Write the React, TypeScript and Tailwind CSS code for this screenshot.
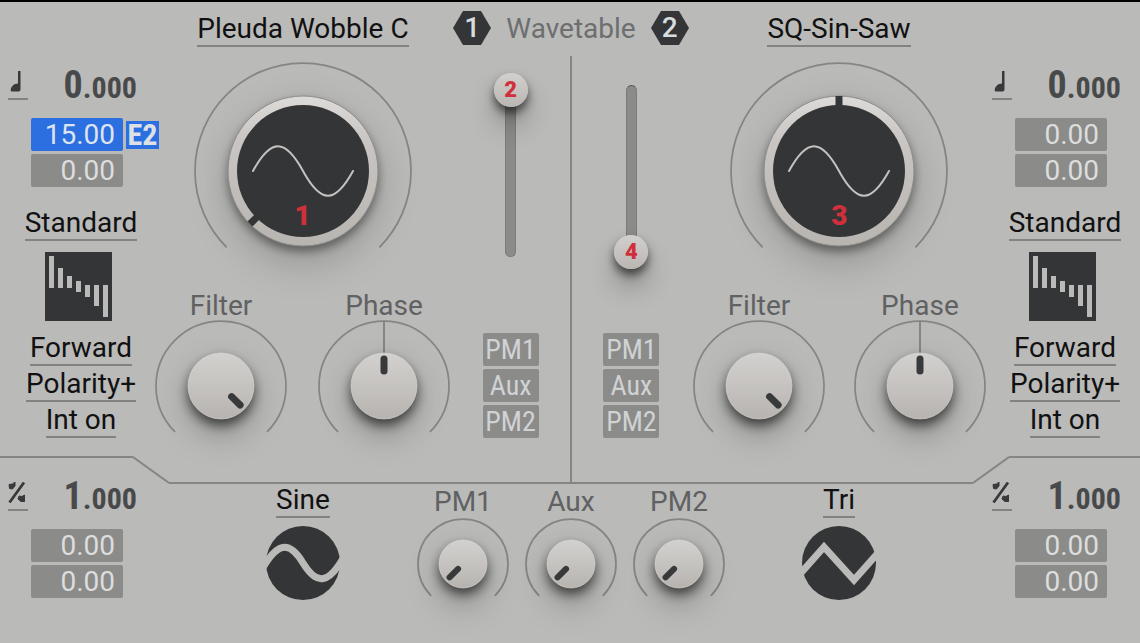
import React, { useId, useState } from "react";
import clsx from "clsx";

const ARC_ANGLE = Math.PI / 4;

interface MenuProps {
  label: string;
  options: string[];
}

const Menu: React.FC<MenuProps> = ({ label, options }) => (
  <select
    aria-label={label}
    className="h-[35px] field-sizing-content appearance-none border-b-2 border-[#828281] bg-transparent text-center text-[28px] leading-[33px] text-[#111112]"
  >
    {options.map((option) => (
      <option key={option}>{option}</option>
    ))}
  </select>
);

interface ArcProps {
  radius: number;
}

// 270 degree scale with the gap at the bottom
const Arc: React.FC<ArcProps> = ({ radius }) => {
  const end = radius * Math.sin(ARC_ANGLE);
  return (
    <path
      d={`M${-end} ${end}A${radius} ${radius} 0 1 1 ${end} ${end}`}
      fill="none"
      stroke="#858584"
      strokeWidth={1.75}
    />
  );
};

interface KnobProps {
  label: string;
  angle: number;
  small?: boolean;
  centered?: boolean;
}

const Knob: React.FC<KnobProps> = ({ label, angle, small, centered }) => {
  const id = useId();
  const face = `${id}-face`;
  const radius = small ? 24 : 33;
  return (
    <div className="flex flex-col items-center">
      <label
        htmlFor={id}
        className="text-[28px] leading-[33px] text-[#606162]"
      >
        {label}
      </label>
      <div className={clsx("relative", small ? "size-[92px]" : "-mt-0.5 size-[132px]")}>
        <svg
          viewBox={small ? "-46 -46 92 92" : "-66 -66 132 132"}
          className="size-full overflow-visible"
          aria-hidden="true"
        >
          <defs>
            <linearGradient id={face} x1="0" y1="0" x2="0" y2="1">
              <stop offset="0" stopColor="#d3d1cf" />
              <stop offset="1" stopColor="#b7b4b0" />
            </linearGradient>
          </defs>
          <Arc radius={small ? 45 : 65} />
          {centered && (
            <path d="M0-65V-33" stroke="#858584" strokeWidth={2} />
          )}
          <circle
            r={radius}
            fill={`url(#${face})`}
            className="[filter:drop-shadow(0_6px_6px_rgba(0,0,0,0.6))_drop-shadow(0_12px_14px_rgba(0,0,0,0.25))]"
          />
          <circle r={radius} fill="none" stroke="#dedcda" strokeOpacity={0.6} />
          <path
            d={small ? "M0-7V-19" : "M0-15V-27"}
            stroke="#38393a"
            strokeWidth={small ? 6 : 7}
            strokeLinecap="round"
            transform={`rotate(${angle})`}
          />
        </svg>
        <input
          id={id}
          type="range"
          min={-135}
          max={135}
          defaultValue={angle}
          className="absolute inset-0 size-full cursor-pointer opacity-0"
        />
      </div>
    </div>
  );
};

interface WaveKnobProps {
  name: string;
  index: number;
  angle: number;
}

const WaveKnob: React.FC<WaveKnobProps> = ({ name, index, angle }) => {
  const ring = `${useId()}-ring`;
  return (
    <div className="relative mt-[5px] size-[220px]">
      <svg
        viewBox="-110 -110 220 220"
        className="size-full overflow-visible"
        aria-hidden="true"
      >
        <defs>
          <linearGradient id={ring} x1="0" y1="0" x2="0" y2="1">
            <stop offset="0" stopColor="#dddbd9" />
            <stop offset="0.3" stopColor="#c8c5c2" />
            <stop offset="1" stopColor="#b8b5b1" />
          </linearGradient>
        </defs>
        <Arc radius={108} />
        <circle
          r={75}
          fill={`url(#${ring})`}
          stroke="#8c8b89"
          className="[filter:drop-shadow(0_5px_5px_rgba(0,0,0,0.4))_drop-shadow(0_14px_18px_rgba(0,0,0,0.2))]"
        />
        <circle r={66} fill="#343537" />
        <path
          d="M0-65V-75"
          stroke="#343537"
          strokeWidth={7}
          transform={`rotate(${angle})`}
        />
        <path
          d="M-50 0C-32-33-18-33 0 0S32 33 50 0"
          fill="none"
          stroke="#c4c2c0"
          strokeWidth={2}
          strokeLinecap="round"
        />
      </svg>
      <span className="absolute inset-x-0 top-[138px] text-center text-[28px] leading-[33px] font-black text-[#d0303b]">
        {index}
      </span>
      <input
        type="range"
        min={-135}
        max={135}
        defaultValue={angle}
        aria-label={`${name} position`}
        className="absolute inset-0 size-full cursor-pointer opacity-0"
      />
    </div>
  );
};

interface FaderProps {
  label: string;
  index: number;
  raised?: boolean;
}

const Fader: React.FC<FaderProps> = ({ label, index, raised }) => (
  <div className="relative mt-[17px] flex h-[196px] w-[34px] justify-center py-3">
    <div className="w-[11px] rounded-full border border-[#7b7b7a] border-t-[#555] bg-[#8b8b8a]" />
    <span
      className={clsx(
        "absolute left-0 flex size-[34px] items-center justify-center rounded-full bg-linear-to-b from-[#d2d0ce] to-[#b9b6b2] text-[22px] leading-none font-black text-[#d0303b] shadow-[0_6px_10px_rgba(0,0,0,0.6),0_18px_26px_rgba(0,0,0,0.25)]",
        raised ? "top-0" : "bottom-0",
      )}
    >
      {index}
    </span>
    <input
      type="range"
      defaultValue={raised ? 100 : 0}
      aria-label={label}
      className="absolute inset-0 size-full cursor-pointer opacity-0 [direction:rtl] [writing-mode:vertical-lr]"
    />
  </div>
);

interface PadsProps {
  osc: number;
}

const Pads: React.FC<PadsProps> = ({ osc }) => (
  <div className="mt-16 flex flex-col gap-[3px]">
    {["PM1", "Aux", "PM2"].map((name) => (
      <button
        key={name}
        type="button"
        aria-label={`${name} to oscillator ${osc}`}
        className="h-[33px] w-14 rounded-xs bg-[#8b8b8a] font-['Roboto_Condensed','Liberation_Sans_Narrow',Roboto,sans-serif] text-[28px] leading-[33px] text-[#d0d2d3]"
      >
        {name}
      </button>
    ))}
  </div>
);

const NoteIcon = () => (
  <svg viewBox="0 0 20 27" className="h-[27px] w-5" fill="#38393a" aria-hidden="true">
    <path d="M10 0h2.500v18.500q0 2-2 2H3.500q-1 0-.8-2 .6-3.500 4.300-5.500l3-.5Z" />
  </svg>
);

const RatioIcon = () => (
  <svg viewBox="0 0 20 27" className="h-[27px] w-5" aria-hidden="true">
    <path d="M1.500 20.500 16 .5" stroke="#38393a" strokeWidth={2.750} />
    <path
      d="M1 2.500 4.500 2 7 0v4L4.500 7 1.500 6.500ZM16.500 19.500H13L10 17l1-3 3 .5L16.500 13Z"
      fill="#38393a"
      stroke="#38393a"
      strokeLinejoin="round"
    />
  </svg>
);

interface TuningProps {
  name: string;
  whole: string;
  ratio?: boolean;
  first?: string;
  macro?: string;
}

const Tuning: React.FC<TuningProps> = ({ name, whole, ratio, first = "0.00", macro }) => (
  <div className="flex flex-col">
    <div className="flex h-9 items-end justify-between pr-[17px]">
      <button
        type="button"
        aria-label={`${name} pitch mode`}
        className="border-b-2 border-[#828281]"
      >
        {ratio ? <RatioIcon /> : <NoteIcon />}
      </button>
      <output className="flex items-baseline font-['Roboto_Condensed','Liberation_Sans_Narrow',Roboto,sans-serif] text-[38px] leading-6 font-bold text-[#48494b]">
        {whole}
        <span className="text-[30px]">.000</span>
      </output>
    </div>
    <div className="mt-[18px] ml-[23px] flex flex-col gap-[3px]">
      <div className="flex items-center gap-[3px]">
        <input
          aria-label={`${name} semitones`}
          defaultValue={first}
          className={clsx(
            "h-[33px] w-[92px] rounded-xs pr-2 text-right text-[28px] leading-[33px]",
            macro ? "bg-[#2b6fe0] text-[#dde4ef]" : "bg-[#8b8b8a] text-[#dcdddd]",
          )}
        />
        {macro && (
          <span className="-mr-2 h-7 w-[33px] shrink-0 bg-[#2b6fe0] text-center font-['Roboto_Condensed','Liberation_Sans_Narrow',Roboto,sans-serif] text-[30px] leading-7 font-bold text-[#dde0e4]">
            {macro}
          </span>
        )}
      </div>
      <input
        aria-label={`${name} hertz`}
        defaultValue="0.00"
        className="h-[33px] w-[92px] rounded-xs bg-[#8b8b8a] pr-2 text-right text-[28px] leading-[33px] text-[#dcdddd]"
      />
    </div>
  </div>
);

// x, top, height of each step
const STEPS = [
  [4, 4, 32],
  [13, 16, 20],
  [22, 24, 12],
  [31, 29, 11],
  [40, 33, 12],
  [49, 33, 21],
  [58, 33, 32],
];

interface SideProps {
  name: string;
  first?: string;
  macro?: string;
}

const Side: React.FC<SideProps> = ({ name, first, macro }) => (
  <div className="pt-[62px]">
    <Tuning name={name} whole="0" first={first} macro={macro} />
    <div className="mt-[19px] flex flex-col items-center">
      <Menu label={`${name} mode`} options={["Standard", "Bend", "Mirror"]} />
      <button type="button" aria-label={`${name} spectrum`} className="mt-[11px] mr-1.5 mb-2.5">
        <svg viewBox="0 0 67 69" className="h-[69px] w-[67px]" aria-hidden="true">
          <path d="M0 0h67v69H0Z" fill="#343537" />
          {STEPS.map(([x, y, height]) => (
            <rect key={x} x={x} y={y} width={5} height={height} fill="#babab8" />
          ))}
        </svg>
      </button>
      <div className="flex flex-col items-center gap-px">
        <Menu label={`${name} direction`} options={["Forward", "Backward"]} />
        <Menu label={`${name} polarity`} options={["Polarity+", "Polarity-"]} />
        <Menu label={`${name} interpolation`} options={["Int on", "Int off"]} />
      </div>
    </div>
  </div>
);

interface OscTabProps {
  index: number;
}

const OscTab: React.FC<OscTabProps> = ({ index }) => {
  const [active, setActive] = useState(true);
  return (
    <button
      type="button"
      aria-pressed={active}
      onClick={() => setActive(!active)}
      className="relative h-[34px] w-[38px] text-[28px] leading-[34px] font-medium text-[#d9dcde]"
    >
      <svg viewBox="0 0 38 34" className="absolute inset-0 size-full" aria-hidden="true">
        <path d="M10 0h18l10 17-10 17H10L0 17Z" fill="#343537" />
      </svg>
      <span className="relative">{index}</span>
    </button>
  );
};

const SineShape = () => (
  <svg viewBox="-37 -37 74 74" className="mt-2 size-[74px]" aria-hidden="true">
    <circle r={37} fill="#343537" />
    <path
      d="M-42 8C-26-21-14-23 0 0S26 21 42-8"
      fill="none"
      stroke="#babab8"
      strokeWidth={7}
    />
  </svg>
);

const TriShape = () => (
  <svg viewBox="-37 -37 74 74" className="mt-2 size-[74px]" aria-hidden="true">
    <circle r={37} fill="#343537" />
    <path
      d="M-40 12-15-16 15 17 40-11"
      fill="none"
      stroke="#babab8"
      strokeWidth={7}
    />
  </svg>
);

export default function App() {
  return (
    <main className="flex min-h-screen flex-col border-t-2 border-black bg-[#babab8] font-[Roboto,sans-serif]">
      {/* Wavetable oscillators */}
      <section className="flex">
        <aside className="w-[154px] pl-2">
          <Side name="Oscillator 1" first="15.00" macro="E2" />
        </aside>

        <div className="flex-1">
          <header className="grid h-[54px] grid-cols-[5fr_4fr_5fr] justify-items-center">
            <div className="pt-2.5">
              <Menu label="Wavetable 1" options={["Pleuda Wobble C"]} />
            </div>
            <div className="flex items-start gap-[15px] pt-[9px]">
              <OscTab index={1} />
              <h1 className="text-[28px] leading-[35px] text-[#6d6e6f]">Wavetable</h1>
              <OscTab index={2} />
            </div>
            <div className="pt-2.5">
              <Menu label="Wavetable 2" options={["SQ-Sin-Saw"]} />
            </div>
          </header>

          <div className="grid h-[400px] grid-cols-[5fr_2fr_2px_2fr_5fr]">
            <div className="flex flex-col items-center">
              <WaveKnob name="Wavetable 1" index={1} angle={-135} />
              <div className="mt-2 flex gap-[31px]">
                <Knob label="Filter" angle={135} />
                <Knob label="Phase" angle={0} centered />
              </div>
            </div>
            <div className="flex flex-col items-center">
              <Fader label="Oscillator 1 level" index={2} raised />
              <Pads osc={1} />
            </div>
            <div className="bg-[#858584]" />
            <div className="flex flex-col items-center">
              <Fader label="Oscillator 2 level" index={4} />
              <Pads osc={2} />
            </div>
            <div className="flex flex-col items-center">
              <WaveKnob name="Wavetable 2" index={3} angle={0} />
              <div className="mt-2 flex gap-[29px]">
                <Knob label="Filter" angle={135} />
                <Knob label="Phase" angle={0} centered />
              </div>
            </div>
          </div>
        </div>

        <aside className="w-[152px] pr-0.5 pl-1">
          <Side name="Oscillator 2" />
        </aside>
      </section>

      {/* Stepped divider */}
      <div className="flex h-7">
        <div className="w-[133px] border-t-2 border-[#858584]" />
        <svg viewBox="0 0 36 28" className="h-7 w-9" aria-hidden="true">
          <path d="M0 1 36 27" stroke="#858584" strokeWidth={2} />
        </svg>
        <div className="flex flex-1 justify-center border-b-2 border-[#858584]">
          <div className="w-0.5 bg-[#858584]" />
        </div>
        <svg viewBox="0 0 36 28" className="h-7 w-9" aria-hidden="true">
          <path d="M0 27 36 1" stroke="#858584" strokeWidth={2} />
        </svg>
        <div className="w-[131px] border-t-2 border-[#858584]" />
      </div>

      {/* Modulation oscillators */}
      <section className="-mt-[9px] flex">
        <aside className="w-[154px] pl-2">
          <Tuning name="Modulator 1" whole="1" ratio />
        </aside>

        <div className="grid flex-1 grid-cols-[5fr_4fr_5fr] pt-2">
          <div className="flex flex-col items-center">
            <Menu label="Modulator 1 shape" options={["Sine", "Tri", "Saw"]} />
            <SineShape />
          </div>
          <div className="-mx-9 flex justify-center gap-4 pt-0.5">
            <Knob label="PM1" angle={-135} small />
            <Knob label="Aux" angle={-135} small />
            <Knob label="PM2" angle={-135} small />
          </div>
          <div className="flex flex-col items-center">
            <Menu label="Modulator 2 shape" options={["Tri", "Sine", "Saw"]} />
            <TriShape />
          </div>
        </div>

        <aside className="w-[152px] pr-0.5 pl-1">
          <Tuning name="Modulator 2" whole="1" ratio />
        </aside>
      </section>
    </main>
  );
}
